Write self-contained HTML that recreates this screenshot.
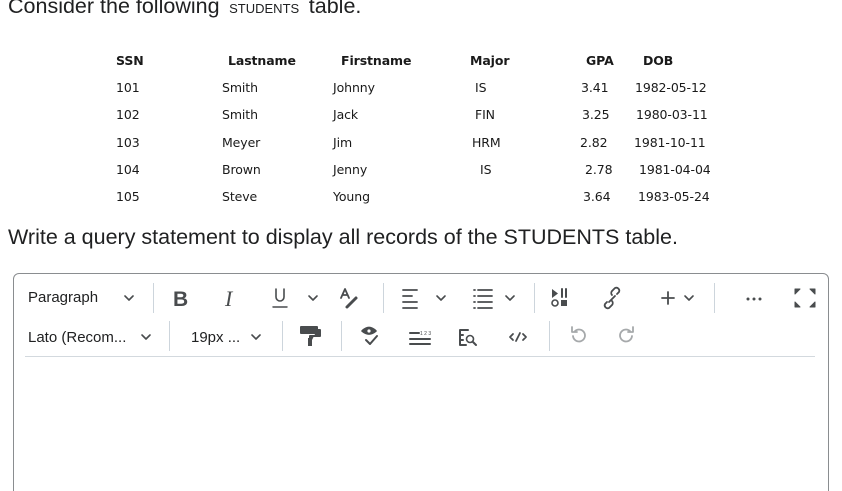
<!DOCTYPE html>
<html style="overflow:hidden;height:491px"><head><meta charset="utf-8"><style>
body{margin:0;width:842px;height:491px;overflow:hidden;background:#fff;position:relative;font-family:"Liberation Sans",sans-serif;color:#202122}
.a{position:absolute;white-space:nowrap}
.t{font-family:"DejaVu Sans",sans-serif;font-size:12.5px;color:#1a1a1a;letter-spacing:-0.1px}
.h{font-weight:bold}
.big{font-size:21.5px;color:#202122}
.box{position:absolute;left:13px;top:273px;width:814px;height:240px;border:1px solid #8a8d90;border-radius:6px}
.sep{position:absolute;width:1px;background:#cdd5dc}
.tb{font-size:15px;color:#202122}
svg{position:absolute;overflow:visible}
</style></head><body>
<div class="a big" style="left:8px;top:-6px">Consider the following <span style="font-size:13px">&nbsp;STUDENTS&nbsp;</span> table.</div>

<div class="a t h" style="left:116px;top:53px">SSN</div>
<div class="a t h" style="left:228px;top:53px">Lastname</div>
<div class="a t h" style="left:341px;top:53px">Firstname</div>
<div class="a t h" style="left:470px;top:53px">Major</div>
<div class="a t h" style="left:586px;top:53px">GPA</div>
<div class="a t h" style="left:643px;top:53px">DOB</div>

<div class="a t" style="left:116px;top:80px">101</div><div class="a t" style="left:222px;top:80px">Smith</div><div class="a t" style="left:333px;top:80px">Johnny</div><div class="a t" style="left:475px;top:80px">IS</div><div class="a t" style="left:581px;top:80px">3.41</div><div class="a t" style="left:635px;top:80px">1982-05-12</div>
<div class="a t" style="left:116px;top:107px">102</div><div class="a t" style="left:222px;top:107px">Smith</div><div class="a t" style="left:333px;top:107px">Jack</div><div class="a t" style="left:475px;top:107px">FIN</div><div class="a t" style="left:582px;top:107px">3.25</div><div class="a t" style="left:636px;top:107px">1980-03-11</div>
<div class="a t" style="left:116px;top:135px">103</div><div class="a t" style="left:222px;top:135px">Meyer</div><div class="a t" style="left:333px;top:135px">Jim</div><div class="a t" style="left:472px;top:135px">HRM</div><div class="a t" style="left:580px;top:135px">2.82</div><div class="a t" style="left:634px;top:135px">1981-10-11</div>
<div class="a t" style="left:116px;top:162px">104</div><div class="a t" style="left:222px;top:162px">Brown</div><div class="a t" style="left:333px;top:162px">Jenny</div><div class="a t" style="left:480px;top:162px">IS</div><div class="a t" style="left:585px;top:162px">2.78</div><div class="a t" style="left:639px;top:162px">1981-04-04</div>
<div class="a t" style="left:116px;top:189px">105</div><div class="a t" style="left:222px;top:189px">Steve</div><div class="a t" style="left:333px;top:189px">Young</div><div class="a t" style="left:583px;top:189px">3.64</div><div class="a t" style="left:638px;top:189px">1983-05-24</div>

<div class="a big" style="left:8px;top:225px">Write a query statement to display all records of the STUDENTS table.</div>

<div class="box"></div>
<div class="a" style="left:25px;top:356px;width:790px;height:1px;background:#d3d9de"></div>
<div class="sep" style="left:153px;top:283px;height:30px"></div>
<div class="sep" style="left:383px;top:283px;height:30px"></div>
<div class="sep" style="left:534px;top:283px;height:30px"></div>
<div class="sep" style="left:714px;top:283px;height:30px"></div>
<div class="sep" style="left:169px;top:321px;height:30px"></div>
<div class="sep" style="left:282px;top:321px;height:30px"></div>
<div class="sep" style="left:341px;top:321px;height:30px"></div>
<div class="sep" style="left:549px;top:321px;height:30px"></div>

<div class="a tb" style="left:28px;top:289px">Paragraph</div>
<div class="a tb" style="left:28px;top:329px">Lato (Recom...</div>
<div class="a tb" style="left:191px;top:329px">19px ...</div>

<svg width="842" height="491" viewBox="0 0 842 491" style="left:0;top:0" fill="none" stroke="#494c4e" stroke-width="1.6" stroke-linecap="round" stroke-linejoin="round">
<path d="M125 296l4 4 4-4"/><path d="M142 335l4 4 4-4"/><path d="M252 335l4 4 4-4"/>
<path d="M309 296l4 4 4-4"/><path d="M437 296l4 4 4-4"/><path d="M506 296l4 4 4-4"/><path d="M685 296l4 4 4-4"/>
<text x="173" y="306" font-family="Liberation Sans" font-weight="bold" font-size="21" fill="#494c4e" stroke="none">B</text>
<text x="225" y="306" font-family="Liberation Serif" font-style="italic" font-size="22" fill="#494c4e" stroke="none">I</text>
<path d="M276 289v8a4 4 0 0 0 8 0v-8"/><path d="M273 307h14" stroke-width="1.4"/>
<path d="M341 298l4-9 4 9M342.5 295h5" stroke-width="1.8"/><path d="M347 307l9-9" stroke-width="3"/>
<path d="M403 290h14M403 296h9M403 302h14M403 308h14" stroke-width="1.8"/>
<path d="M474 290h1M474 296h1M474 302h1M474 308h1M478 290h14M478 296h14M478 302h14M478 308h14" stroke-width="1.8"/>
<path d="M552 289v9l6-4.5z" fill="#494c4e" stroke="none"/><path d="M562 289v8M566 289v8" stroke-width="2"/>
<circle cx="555" cy="303" r="3"/><rect x="561" y="300" width="6" height="6" fill="#494c4e" stroke="none"/>
<path d="M607 302l-2 2a3 3 0 0 0 4 4l3-3a3 3 0 0 0 0-4M617 294l2-2a3 3 0 0 0-4-4l-3 3a3 3 0 0 0 0 4M609 302l6-6" stroke-width="1.8"/>
<path d="M662 298h12M668 292v12" stroke-width="1.8"/>
<circle cx="748" cy="299" r="1.5" fill="#494c4e" stroke="none"/><circle cx="754" cy="299" r="1.5" fill="#494c4e" stroke="none"/><circle cx="760" cy="299" r="1.5" fill="#494c4e" stroke="none"/>
<path d="M795 289h5l-5 5zM815 289h-5l5 5zM795 307h5l-5-5zM815 307h-5l5-5z" fill="#494c4e" stroke-width="1"/>
<path d="M301 327h16v6h-16zM317 330h3v6h-10v8" stroke-width="2" fill="#494c4e"/><rect x="308" y="338" width="4" height="8" fill="#494c4e" stroke="none"/>
<path d="M362 331q7-7 14 0q-7 6-14 0z" fill="#494c4e"/><circle cx="369" cy="331" r="1.6" fill="#fff" stroke="none"/><path d="M366 340l4 4 7-8" stroke-width="2"/>
<path d="M410 333h9M410 339h20M410 344h20" stroke-width="2"/><text x="420" y="335" font-size="5" fill="#494c4e" stroke="none" font-family="Liberation Sans">1 2 3</text>
<path d="M460 330h8M460 335h3M460 340h3M460 345h6M460 330v15" stroke-width="2"/><circle cx="470" cy="339" r="3.5"/><path d="M473 342l3 3" stroke-width="2"/>
<path d="M513 334l-3 3 3 3M523 334l3 3-3 3M520 333l-4 8" stroke-width="1.8"/>
<path d="M575 331a6 6 0 1 1-2 5" stroke="#a6a9ab" stroke-width="1.8"/><path d="M572 327v5h5" stroke="#a6a9ab" stroke-width="1.8"/>
<path d="M630 331a6 6 0 1 0 2 5" stroke="#a6a9ab" stroke-width="1.8"/><path d="M633 327v5h-5" stroke="#a6a9ab" stroke-width="1.8"/>
</svg>
</body></html>
